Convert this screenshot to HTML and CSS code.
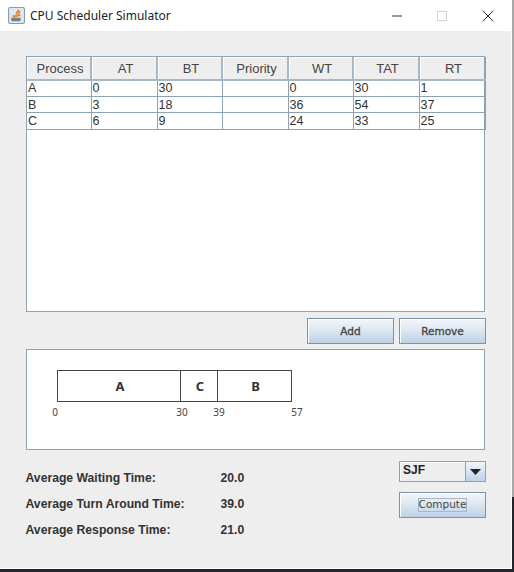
FILE: index.html
```html
<!DOCTYPE html>
<html lang="en">
<head>
<meta charset="utf-8">
<title>CPU Scheduler Simulator</title>
<link rel="stylesheet" href="styles.css">
</head>
<body>
<div class="screen">
  <div class="window">
    <header class="titlebar">
      <svg class="app-icon" viewBox="0 0 16 16" aria-hidden="true">
        <rect x="0.5" y="0.5" width="15" height="15" rx="1.5" fill="#dfe7ef" stroke="#8c9aa8"/>
        <path d="M9.5 2.5 C10.5 4 7 5 8 7 M11 3.5 C11.5 5 9.5 5.5 10 7" fill="none" stroke="#e8781e" stroke-width="1.4"/>
        <path d="M4 8 L11 6.5 L12 8.5 L5 10 Z" fill="#ef8a2c"/>
        <path d="M3 10 H12 V12 C12 13 11 13.5 10 13.5 H5 C4 13.5 3 13 3 12 Z" fill="#6f8296"/>
      </svg>
      <span class="title">CPU Scheduler Simulator</span>
      <div class="win-controls">
        <svg class="win-btn win-min" viewBox="0 0 12 12" aria-hidden="true"><path d="M1 6 H11" stroke="#333" stroke-width="1"/></svg>
        <svg class="win-btn win-max" viewBox="0 0 12 12" aria-hidden="true"><rect x="1.5" y="1.5" width="9" height="9" fill="none" stroke="#d4d4d4" stroke-width="1"/></svg>
        <svg class="win-btn win-close" viewBox="0 0 12 12" aria-hidden="true"><path d="M0.5 0.5 L11.5 11.5 M11.5 0.5 L0.5 11.5" stroke="#333" stroke-width="1"/></svg>
      </div>
    </header>
    <main class="content">
      <section class="table-panel">
        <table class="grid">
          <colgroup>
            <col class="col-narrow"><col class="col-wide"><col class="col-mid"><col class="col-wide"><col class="col-mid"><col class="col-wide"><col class="col-wide">
          </colgroup>
          <thead>
            <tr><th>Process</th><th>AT</th><th>BT</th><th>Priority</th><th>WT</th><th>TAT</th><th>RT</th></tr>
          </thead>
          <tbody>
            <tr><td>A</td><td>0</td><td>30</td><td></td><td>0</td><td>30</td><td>1</td></tr>
            <tr><td>B</td><td>3</td><td>18</td><td></td><td>36</td><td>54</td><td>37</td></tr>
            <tr><td>C</td><td>6</td><td>9</td><td></td><td>24</td><td>33</td><td>25</td></tr>
          </tbody>
        </table>
      </section>
      <div class="actions">
        <button class="btn">Add</button>
        <button class="btn">Remove</button>
      </div>
      <section class="gantt-panel">
        <div class="gantt">
          <div class="seg seg-a">A</div>
          <div class="seg seg-c">C</div>
          <div class="seg seg-b">B</div>
          <span class="tick tick-0">0</span>
          <span class="tick tick-30">30</span>
          <span class="tick tick-39">39</span>
          <span class="tick tick-57">57</span>
        </div>
      </section>
      <section class="bottom">
        <dl class="stats">
          <div class="stat"><dt>Average Waiting Time:</dt><dd>20.0</dd></div>
          <div class="stat"><dt>Average Turn Around Time:</dt><dd>39.0</dd></div>
          <div class="stat"><dt>Average Response Time:</dt><dd>21.0</dd></div>
        </dl>
        <div class="controls">
          <div class="combo">
            <span class="combo-value">SJF</span>
            <span class="combo-arrow"><svg viewBox="0 0 11 6" class="arrow-icon" aria-hidden="true"><path d="M0 0 H11 L5.5 6 Z" fill="#222"/></svg></span>
          </div>
          <button class="btn btn-focus"><span class="focus-ring">Compute</span></button>
        </div>
      </section>
    </main>
  </div>
  <div class="edge">
    <div class="edge-light"></div>
    <div class="edge-dark"></div>
  </div>
</div>
<div class="taskbar"></div>
</body>
</html>
```
FILE: styles.css
```css
* { box-sizing: border-box; }
html, body { margin: 0; padding: 0; width: 514px; height: 572px; overflow: hidden; background: #fff; }
body { display: flex; flex-direction: column; font-family: "Liberation Sans", Arial, sans-serif; color: #333; }

.screen { display: flex; height: 569px; }
.window { width: 512px; height: 569px; display: flex; flex-direction: column; background: #eeeeee; border-bottom: 1px solid #fff; border-right: 1px solid #fff; }
.edge { width: 2px; display: flex; flex-direction: column; }
.edge-light { height: 497px; background: #a9a9a9; }
.edge-dark { flex: 1; background: #23252b; }
.taskbar { height: 3px; background: #23252b; }

.titlebar { height: 31px; flex: none; background: #fff; display: flex; align-items: center; padding-left: 8px; }
.app-icon { width: 17px; height: 17px; flex: none; }
.title { margin-left: 5px; font: 12px "Noto Sans", sans-serif; color: #222; }
.win-controls { margin-left: auto; display: flex; align-items: center; }
.win-btn { flex: none; }
.win-min { width: 12px; height: 12px; }
.win-max { width: 12px; height: 12px; margin-left: 33px; }
.win-close { width: 12px; height: 12px; margin-left: 34px; margin-right: 17px; }

.content { flex: 1; padding: 25px 25px 0 26px; display: flex; flex-direction: column; }

.table-panel { width: 459px; height: 256px; flex: none; background: #fff; border: 1px solid #8ea2b5; }
.grid { border-collapse: collapse; table-layout: fixed; width: 457px; font-size: 13px; }
.col-narrow { width: 64px; }
.col-mid { width: 65px; }
.col-wide { width: 66px; }
.grid th { height: 23px; padding: 0 0 0 3px; font-weight: 400; text-align: center; color: #444; background: #eeeeee; border-right: 2px solid #a9b8c6; border-bottom: 2px solid #a9b8c6; box-shadow: inset 1px 1px 0 #fff; }
.grid td { height: 16.4px; padding: 0 0 0 1px; line-height: 14px; color: #333; border-right: 1px solid #8ea2b5; border-bottom: 1px solid #8ea2b5; font-size: 12.5px; }
.grid th:last-child, .grid td:last-child { border-right: 2px solid #8ea2b5; }

.actions { display: flex; justify-content: flex-end; gap: 5px; margin-top: 6px; height: 26px; flex: none; }
.btn { width: 87px; height: 26px; padding: 0; border: 1px solid #7d93a8; background: linear-gradient(#f2f6fa 0%, #e3ebf3 35%, #bcd2e8 100%); box-shadow: inset 1px 1px 0 #fff; font: 400 10.5px "DejaVu Sans", sans-serif; -webkit-text-stroke: 0.3px #444; color: #444; display: flex; align-items: center; justify-content: center; }

.gantt-panel { width: 459px; height: 101px; flex: none; margin-top: 5px; background: #fff; border: 1px solid #8ea2b5; padding: 20px 0 0 30px; }
.gantt { position: relative; display: flex; width: 235px; height: 32px; background: #fff; border: 1px solid #444; border-right: none; }
.seg { border-right: 1px solid #444; display: flex; align-items: center; justify-content: center; font: 700 13px "Noto Sans", sans-serif; color: #333; padding-left: 2px; }
.seg-a { width: 123px; }
.seg-c { width: 37px; }
.seg-b { width: 74px; }
.tick { position: absolute; top: 34px; transform: translateX(-50%); font: 10px "Noto Sans", sans-serif; color: #444; }
.tick-0 { left: -3px; }
.tick-30 { left: 124px; }
.tick-39 { left: 161px; }
.tick-57 { left: 239px; }

.bottom { display: flex; justify-content: space-between; margin-top: 11px; }
.stats { margin: 0; padding-top: 10px; display: flex; flex-direction: column; gap: 12px; }
.stat { display: flex; height: 14px; align-items: center; font-size: 12.2px; font-weight: 700; color: #333; }
.stat dt { width: 195px; margin-left: -0.5px; }
.stat dd { margin: 0; }

.controls { display: flex; flex-direction: column; gap: 10px; width: 87px; }
.combo { height: 21px; display: flex; border: 1px solid #8ea2b5; background: #eeeeee; box-shadow: inset 1px 1px 0 #fff; }
.combo-value { flex: 1; padding-left: 3px; font-size: 12px; font-weight: 700; line-height: 17px; color: #222; }
.combo-arrow { width: 20px; border-left: 1px solid #8ea2b5; background: linear-gradient(#f2f6fa, #bcd2e8); display: flex; align-items: center; justify-content: center; }
.arrow-icon { width: 11px; height: 6px; }
.btn-focus { -webkit-text-stroke: 0; }
.focus-ring { border: 1px solid #a9b8c6; padding: 0 0 1px; line-height: 11px; height: 14px; }
```
